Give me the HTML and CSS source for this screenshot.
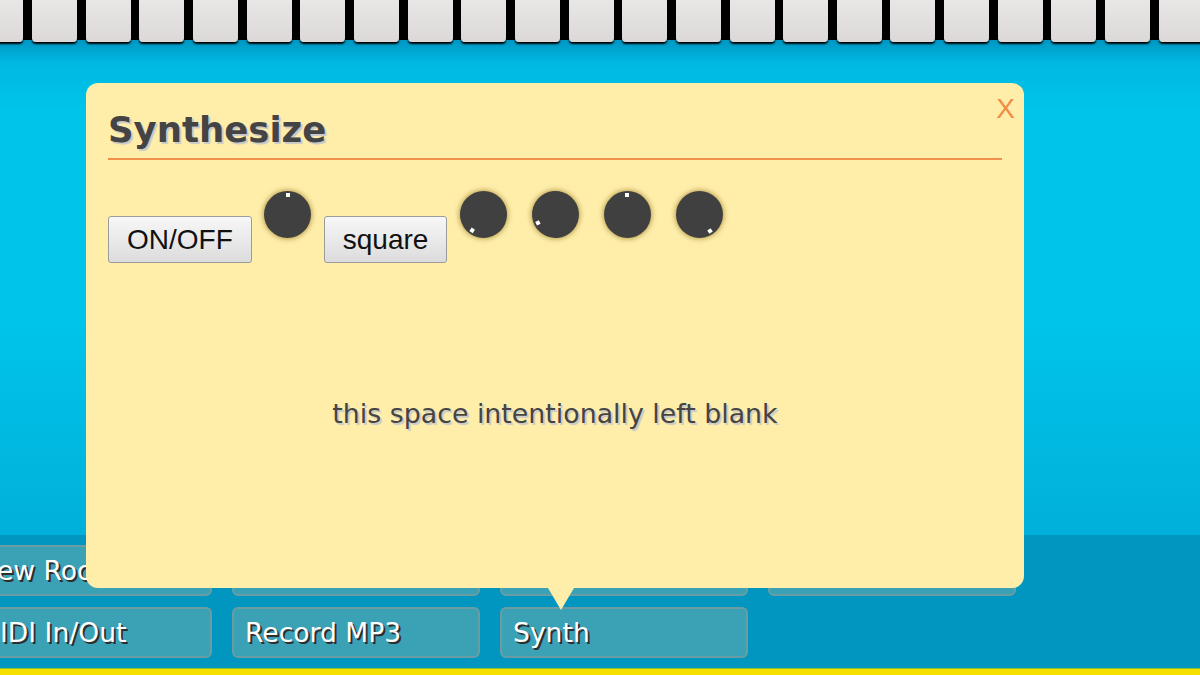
FILE: index.html
```html
<!DOCTYPE html>
<html lang="en">
<head>
    <meta charset="UTF-8">
    <meta name="viewport" content="width=device-width, initial-scale=1.0">
    <title>Synthesize</title>
    <link rel="stylesheet" href="styles.css">
</head>
<body>
    <div class="piano">
        <div class="key"></div><div class="key"></div><div class="key"></div><div class="key"></div>
        <div class="key"></div><div class="key"></div><div class="key"></div><div class="key"></div>
        <div class="key"></div><div class="key"></div><div class="key"></div><div class="key"></div>
        <div class="key"></div><div class="key"></div><div class="key"></div><div class="key"></div>
        <div class="key"></div><div class="key"></div><div class="key"></div><div class="key"></div>
        <div class="key"></div><div class="key"></div><div class="key"></div><div class="key"></div>
    </div>

    <div class="stage"></div>

    <div class="footer">
        <div class="menu">
            <button class="menu-btn">New Room</button>
            <button class="menu-btn">Invite</button>
            <button class="menu-btn">Instruments</button>
            <button class="menu-btn">Settings</button>
            <button class="menu-btn">MIDI In/Out</button>
            <button class="menu-btn">Record MP3</button>
            <button class="menu-btn">Synth</button>
        </div>
    </div>
    <div class="stripe"></div>

    <div class="popup">
        <span class="close">X</span>
        <h2 class="popup-title">Synthesize</h2>
        <div class="controls">
            <button class="ctrl-btn">ON/OFF</button>
            <div class="knob" style="transform: rotate(0deg)"></div>
            <button class="ctrl-btn">square</button>
            <div class="knob" style="transform: rotate(-146deg)"></div>
            <div class="knob" style="transform: rotate(-117deg)"></div>
            <div class="knob" style="transform: rotate(0deg)"></div>
            <div class="knob" style="transform: rotate(146deg)"></div>
        </div>
        <p class="blank">this space intentionally left blank</p>
        <div class="pointer"></div>
    </div>
</body>
</html>
```

FILE: styles.css
```css
html, body {
    margin: 0;
    height: 100%;
}

body {
    position: relative;
    display: flex;
    flex-direction: column;
    overflow: hidden;
    font-family: 'DejaVu Sans', Verdana, sans-serif;
    background: linear-gradient(#0096c2 40px, #00b8e2 62px, #00c4ea 110px, #00c4ea 320px, #00b0da 535px);
}

.piano {
    height: 40px;
    background: #000;
    display: flex;
    gap: 8.67px;
    margin-left: -21.7px;
    flex-shrink: 0;
}

.key {
    width: 45px;
    height: 42px;
    flex-shrink: 0;
    background: linear-gradient(#e9e6e6, #dcd8d8);
    border-radius: 0 0 4px 4px;
    box-shadow: 0 2px 2px #000;
}

.stage {
    flex: 1;
}

.footer {
    height: 123px;
    padding-top: 10px;
    background: #0096c0;
    flex-shrink: 0;
}

.menu {
    display: grid;
    grid-template-columns: repeat(4, 248px);
    gap: 11px 20px;
    margin-left: -36px;
}

.menu-btn {
    height: 51px;
    padding: 0 0 0 11px;
    text-align: left;
    font-family: 'DejaVu Sans', Verdana, sans-serif;
    font-size: 26.6px;
    color: #fff;
    text-shadow: 2px 2px 0 #2e2e2e;
    background: #3ba2b6;
    border: 2px solid #6a9ca4;
    border-radius: 6px;
    white-space: nowrap;
    overflow: hidden;
}

.stripe {
    height: 6px;
    background: #f6e000;
    border-top: 1px solid #8cc03a;
    flex-shrink: 0;
}

.popup {
    position: absolute;
    left: 86px;
    top: 83px;
    width: 938px;
    height: 505px;
    box-sizing: border-box;
    padding: 26px 22px 0;
    background: #feeeaa;
    border-radius: 12px;
}

.close {
    position: absolute;
    top: 12px;
    right: 9px;
    font-family: 'Liberation Sans', Arial, sans-serif;
    font-size: 28px;
    line-height: 1;
    color: #f28c44;
    cursor: pointer;
}

.popup-title {
    margin: 0;
    padding-bottom: 8px;
    font-size: 35.5px;
    line-height: 41px;
    font-weight: bold;
    color: #444;
    text-shadow: 2px 2px 1px #c8c8c8;
    border-bottom: 2px solid #f0904a;
}

.controls {
    display: flex;
    align-items: flex-start;
    margin-top: 31px;
}

.ctrl-btn {
    margin-top: 25px;
    height: 47px;
    padding: 0 18px;
    font-family: 'Liberation Sans', Arial, sans-serif;
    font-size: 28px;
    color: #111;
    background: linear-gradient(#f7f7f7, #dcdcdc);
    border: 1px solid #9c9c9c;
    border-radius: 3px;
}

.knob {
    position: relative;
    width: 47px;
    height: 47px;
    margin: 0 12.5px;
    border-radius: 50%;
    background: #404040;
    box-shadow: 0 0 5px 1px rgba(130, 95, 0, 0.55);
}

.knob::after {
    content: '';
    position: absolute;
    left: 21.5px;
    top: 2px;
    width: 4px;
    height: 4px;
    background: #fff;
}

.blank {
    margin: 136px 0 0;
    text-align: center;
    font-size: 26.8px;
    line-height: 30px;
    color: #444;
    text-shadow: 2px 2px 1px #c8c8c8;
}

.pointer {
    position: absolute;
    left: 462px;
    top: 100%;
    width: 0;
    height: 0;
    border-left: 13.5px solid transparent;
    border-right: 13.5px solid transparent;
    border-top: 22px solid #feeeaa;
}
```
